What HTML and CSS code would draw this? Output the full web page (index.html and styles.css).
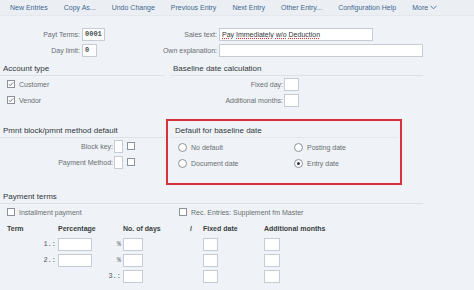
FILE: index.html
```html
<!DOCTYPE html>
<html>
<head>
<meta charset="utf-8">
<link rel="stylesheet" href="styles.css">
</head>
<body>
<div class="toolbar">
  <span>New Entries</span>
  <span>Copy As...</span>
  <span>Undo Change</span>
  <span>Previous Entry</span>
  <span>Next Entry</span>
  <span>Other Entry...</span>
  <span>Configuration Help</span>
  <span class="more">More <svg width="7" height="5" viewBox="0 0 7 5"><polyline points="0.5,0.8 3.5,3.8 6.5,0.8" fill="none" stroke="#3f6690" stroke-width="0.9"/></svg></span>
</div>

<div class="head">
  <label class="lbl">Payt Terms:</label>
  <div><div class="inp mono bold w23">0001</div></div>
  <label class="lbl">Sales text:</label>
  <div><div class="inp w154 txt"><span class="sp">Pay</span> <span class="sp">Immediately</span> <span class="sp">w/o</span> <span class="sp">Deduction</span></div></div>
  <label class="lbl">Day limit:</label>
  <div><div class="inp mono bold w15">0</div></div>
  <label class="lbl">Own explanation:</label>
  <div><div class="inp w204"></div></div>
</div>

<div class="rowA">
  <div class="panel left">
    <div class="title">Account type</div>
    <div class="line chk"><span class="cb on"><svg width="8" height="8" viewBox="0 0 8 8"><polyline points="1.8,4.2 3.3,5.7 6.2,2.3" fill="none" stroke="#55595e" stroke-width="0.8"/></svg></span><span class="t">Customer</span></div>
    <div class="line chk"><span class="cb on"><svg width="8" height="8" viewBox="0 0 8 8"><polyline points="1.8,4.2 3.3,5.7 6.2,2.3" fill="none" stroke="#55595e" stroke-width="0.8"/></svg></span><span class="t">Vendor</span></div>
  </div>
  <div class="panel rightA">
    <div class="title">Baseline date calculation</div>
    <div class="line fld"><span class="lbl lw113">Fixed day:</span><div class="inp w15"></div></div>
    <div class="line fld"><span class="lbl lw113">Additional months:</span><div class="inp w15"></div></div>
  </div>
</div>

<div class="rowB">
  <div class="panel left padB">
    <div class="title">Pmnt block/pmnt method default</div>
    <div class="line fld"><span class="lbl lw113">Block key:</span><div class="inp w9"></div><span class="cb ml4"></span></div>
    <div class="line fld"><span class="lbl lw113">Payment Method:</span><div class="inp w9"></div><span class="cb ml4"></span></div>
  </div>
  <div class="redbox">
    <div class="title inner">Default for baseline date</div>
    <div class="radios">
      <div class="line rd"><span class="radio"></span><span class="t">No default</span></div>
      <div class="line rd"><span class="radio"></span><span class="t">Posting date</span></div>
      <div class="line rd"><span class="radio"></span><span class="t">Document date</span></div>
      <div class="line rd"><span class="radio on"></span><span class="t">Entry date</span></div>
    </div>
  </div>
</div>

<div class="rowC">
  <div class="title wide">Payment terms</div>
  <div class="line chkrow">
    <div class="chk"><span class="cb"></span><span class="t">Installment payment</span></div>
    <div class="chk"><span class="cb"></span><span class="t">Rec. Entries: Supplement fm Master</span></div>
  </div>
  <div class="terms">
    <div class="th pl7">Term</div>
    <div class="th">Percentage</div>
    <div class="th">No. of days</div>
    <div class="th">/</div>
    <div class="th">Fixed date</div>
    <div class="th">Additional months</div>

    <div class="mono lblr">1.:</div>
    <div class="split"><div class="inp w34"></div><span class="pct">%</span></div>
    <div><div class="inp w20"></div></div>
    <div></div>
    <div><div class="inp w15"></div></div>
    <div><div class="inp w16"></div></div>

    <div class="mono lblr">2.:</div>
    <div class="split"><div class="inp w34"></div><span class="pct">%</span></div>
    <div><div class="inp w20"></div></div>
    <div></div>
    <div><div class="inp w15"></div></div>
    <div><div class="inp w16"></div></div>

    <div></div>
    <div class="mono lblr">3.:</div>
    <div><div class="inp w20"></div></div>
    <div></div>
    <div><div class="inp w15"></div></div>
    <div><div class="inp w16"></div></div>
  </div>
</div>
</body>
</html>
```

FILE: styles.css
```css
html, body {
  margin: 0;
  padding: 0;
}
body {
  width: 474px;
  height: 290px;
  overflow: hidden;
  background: #eff3f8;
  font-family: "Liberation Sans", Arial, sans-serif;
  font-size: 7px;
  color: #6a6d70;
}
.toolbar {
  display: flex;
  align-items: center;
  gap: 16px;
  height: 16px;
  padding-left: 10px;
  padding-bottom: 1px;
  background: #ebeff3;
  border-bottom: 1px solid #e4e8ed;
  color: #3f6690;
  font-size: 7px;
  box-sizing: border-box;
}
.more {
  display: flex;
  align-items: center;
  gap: 2px;
}
.head {
  display: grid;
  grid-template-columns: 80px 80px 57px 1fr;
  grid-template-rows: 13px 13px;
  row-gap: 3px;
  margin-top: 12px;
  align-items: center;
}
.lbl {
  text-align: right;
  padding-right: 1px;
  white-space: nowrap;
  color: #6a6d70;
}
.head .lbl {
  padding-right: 0;
}
.head > div {
  padding-left: 2px;
}
.inp {
  box-sizing: border-box;
  height: 13px;
  background: #fff;
  border: 1px solid #c5ccd3;
  line-height: 11px;
  padding-left: 2px;
  color: #32363a;
  white-space: nowrap;
  overflow: hidden;
}
.mono {
  font-family: "Liberation Mono", "Courier New", monospace;
}
.bold {
  font-weight: bold;
  color: #4a4d50;
}
.txt {
  color: #32363a;
}
.sp {
  text-decoration: underline dotted #e0303a;
  text-decoration-thickness: 1px;
  text-underline-offset: 1px;
}
.w9 { width: 9px; }
.w15 { width: 15px; }
.w16 { width: 16px; }
.w20 { width: 20px; }
.w23 { width: 23px; }
.w34 { width: 34px; }
.w154 { width: 154px; }
.w204 { width: 204px; }

.title {
  height: 13px;
  line-height: 13px;
  font-size: 8px;
  color: #32363a;
  border-bottom: 1px solid #dde2e7;
  padding-left: 3px;
  white-space: nowrap;
}
.rowA {
  display: flex;
  margin-top: 5px;
}
.left {
  width: 165px;
  flex: none;
}
.rightA {
  width: 253px;
  margin-left: 5px;
}
.line {
  height: 16px;
  display: flex;
  align-items: center;
}
.chk {
  display: flex;
  align-items: center;
}
.cb {
  box-sizing: border-box;
  width: 8px;
  height: 8px;
  border: 1px solid #8c9298;
  background: #fff;
  display: inline-flex;
  align-items: center;
  justify-content: center;
  flex: none;
}
.cb svg {
  margin: -1px;
}
.left .chk .cb, .chkrow .chk .cb {
  margin-left: 7px;
}
.chk .t {
  margin-left: 4px;
}
.lw113 {
  width: 113px;
  box-sizing: border-box;
  padding-right: 1px;
}
.rightA .lw113 {
  width: 114px;
}
.left .lw113 {
  width: 114px;
}
.ml4 {
  margin-left: 4px;
}
.rowB {
  display: flex;
  margin-top: 11px;
}
.padB {
  padding-top: 5px;
}
.redbox {
  box-sizing: border-box;
  width: 236px;
  height: 66px;
  margin-left: 1px;
  border: 2px solid #d8313c;
  padding: 3px 2px 0 2px;
}
.title.inner {
  padding-left: 5px;
  border-bottom-color: #e3e7eb;
}
.radios {
  display: grid;
  grid-template-columns: 116px 1fr;
  padding-left: 8px;
  padding-top: 1px;
}
.radio {
  box-sizing: border-box;
  width: 9px;
  height: 9px;
  border-radius: 50%;
  border: 1px solid #8c9298;
  background: #fff;
  position: relative;
  flex: none;
}
.radio.on::after {
  content: "";
  position: absolute;
  left: 2px;
  top: 2px;
  width: 3px;
  height: 3px;
  border-radius: 50%;
  background: #32363a;
}
.rd .t {
  margin-left: 4px;
}
.rowC {
  margin-top: 5px;
}
.title.wide {
  width: 420px;
}
.chkrow {
  display: grid;
  grid-template-columns: 172px 1fr;
}
.terms {
  display: grid;
  grid-template-columns: 58px 65px 67px 13px 61px auto;
  grid-auto-rows: 16px;
  align-items: center;
}
.th {
  color: #3a3d40;
  font-weight: bold;
  white-space: nowrap;
  font-size: 7px;
}
.pl7 {
  padding-left: 7px;
}
.lblr {
  text-align: right;
  padding-right: 2px;
  color: #55585b;
}
.split {
  display: flex;
  align-items: center;
  justify-content: space-between;
}
.pct {
  padding-right: 2px;
  font-family: "Liberation Mono", monospace;
}
```
